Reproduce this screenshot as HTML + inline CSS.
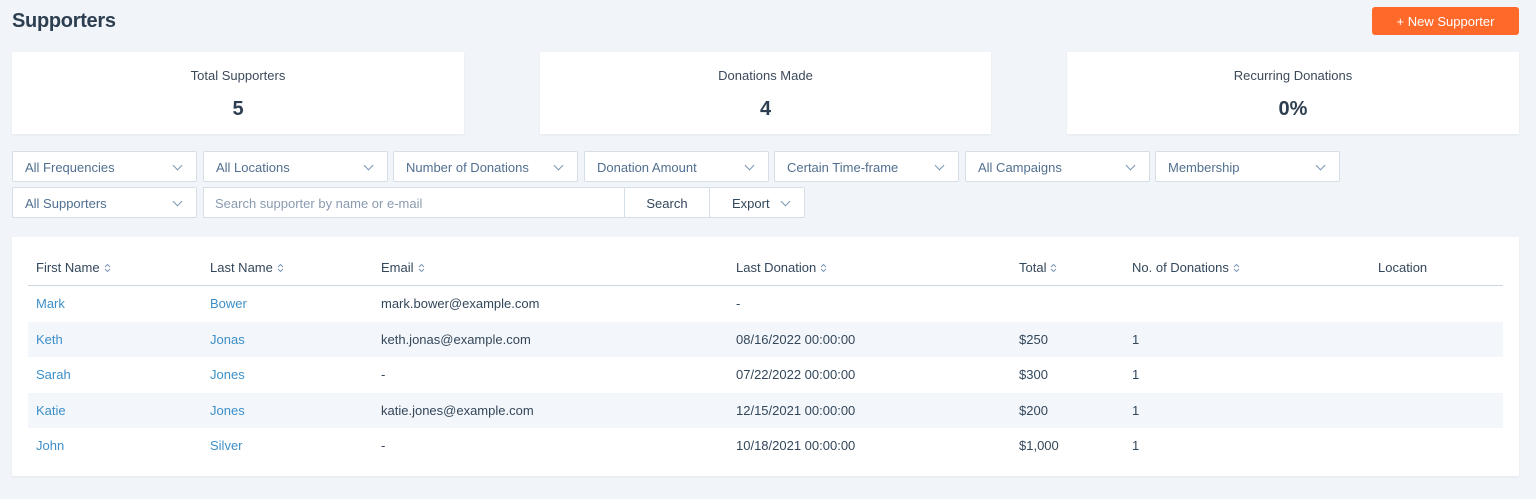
<!DOCTYPE html>
<html><head><style>
*{box-sizing:border-box;margin:0;padding:0}
body{width:1536px;height:499px;background:#f1f5f9;font-family:"Liberation Sans",sans-serif;color:#33475b;position:relative;overflow:hidden;font-size:13px}
.abs{position:absolute}
h1{position:absolute;left:12px;top:10px;font-size:20px;font-weight:bold;color:#2d3e50;letter-spacing:-0.3px}
.btn{left:1372px;top:7px;width:147px;height:28px;background:#ff6a2b;color:#fff;border-radius:3px;text-align:center;line-height:29px;font-size:13px}
.card{background:#fff;top:52px;height:82px;width:452px;box-shadow:0 1px 2px rgba(0,0,0,.06);text-align:center}
.card .l{margin-top:16px;font-size:13px;color:#3c4a5a}
.card .v{margin-top:15px;font-size:20px;font-weight:bold;color:#2d3e50}
.sel{height:31px;width:185px;background:#fff;border:1px solid #d6dee8;border-radius:2px;line-height:31px;padding-left:12px;color:#516f90;font-size:13px}
.sel:after{content:"";position:absolute;right:15px;top:10px;width:6px;height:6px;border-right:1px solid #7c98b6;border-bottom:1px solid #7c98b6;transform:rotate(45deg)}
.tbl{left:12px;top:237px;width:1507px;height:239px;background:#fff;box-shadow:0 1px 2px rgba(0,0,0,.06)}
.row{position:absolute;left:16px;width:1475px;height:35.5px;line-height:35.5px}
.row span{position:absolute;top:0}
.lnk{color:#3d8fc9}
.c1{left:8px}.c2{left:182px}.c3{left:353px}.c4{left:708px}.c5{left:991px}.c6{left:1104px}.c7{left:1350px}
.s{display:inline-block;width:7px;height:10px;margin-left:4px;vertical-align:-1px}
</style></head><body>
<h1>Supporters</h1>
<div class="abs btn">+ New Supporter</div>
<div class="abs card" style="left:12px"><div class="l">Total Supporters</div><div class="v">5</div></div>
<div class="abs card" style="left:540px;width:451px"><div class="l">Donations Made</div><div class="v">4</div></div>
<div class="abs card" style="left:1067px"><div class="l">Recurring Donations</div><div class="v">0%</div></div>

<div class="abs sel" style="left:12px;top:151px">All Frequencies</div>
<div class="abs sel" style="left:203px;top:151px">All Locations</div>
<div class="abs sel" style="left:393px;top:151px">Number of Donations</div>
<div class="abs sel" style="left:584px;top:151px">Donation Amount</div>
<div class="abs sel" style="left:774px;top:151px">Certain Time-frame</div>
<div class="abs sel" style="left:965px;top:151px">All Campaigns</div>
<div class="abs sel" style="left:1155px;top:151px">Membership</div>
<div class="abs sel" style="left:12px;top:187px">All Supporters</div>
<div class="abs" style="left:203px;top:187px;width:422px;height:31px;background:#fff;border:1px solid #d6dee8;line-height:31px;padding-left:11px;color:#8a9bb0">Search supporter by name or e-mail</div>
<div class="abs" style="left:624px;top:187px;width:86px;height:31px;background:#fff;border:1px solid #d6dee8;line-height:31px;text-align:center;color:#33475b">Search</div>
<div class="abs sel" style="left:709px;top:187px;width:96px;padding-left:22px;color:#33475b">Export</div>

<div class="abs tbl">
<div class="row" style="top:13px">
<span class="c1">First Name<svg class="s" viewBox="0 0 7 10"><path d="M1 4 3.5 1.5 6 4M1 6 3.5 8.5 6 6" fill="none" stroke="#7c98b6" stroke-width="1"/></svg></span>
<span class="c2">Last Name<svg class="s" viewBox="0 0 7 10"><path d="M1 4 3.5 1.5 6 4M1 6 3.5 8.5 6 6" fill="none" stroke="#7c98b6" stroke-width="1"/></svg></span>
<span class="c3">Email<svg class="s" viewBox="0 0 7 10"><path d="M1 4 3.5 1.5 6 4M1 6 3.5 8.5 6 6" fill="none" stroke="#7c98b6" stroke-width="1"/></svg></span>
<span class="c4">Last Donation<svg class="s" viewBox="0 0 7 10"><path d="M1 4 3.5 1.5 6 4M1 6 3.5 8.5 6 6" fill="none" stroke="#7c98b6" stroke-width="1"/></svg></span>
<span class="c5">Total<svg class="s" viewBox="0 0 7 10"><path d="M1 4 3.5 1.5 6 4M1 6 3.5 8.5 6 6" fill="none" stroke="#7c98b6" stroke-width="1"/></svg></span>
<span class="c6">No. of Donations<svg class="s" viewBox="0 0 7 10"><path d="M1 4 3.5 1.5 6 4M1 6 3.5 8.5 6 6" fill="none" stroke="#7c98b6" stroke-width="1"/></svg></span>
<span class="c7">Location</span></div>
<div class="abs" style="left:16px;top:48px;width:1475px;height:1px;background:#cbd6e2"></div>
<div class="row" style="top:49px"><span class="c1 lnk">Mark</span><span class="c2 lnk">Bower</span><span class="c3">mark.bower@example.com</span><span class="c4">-</span></div>
<div class="row" style="top:84.5px;background:#f3f6fa"><span class="c1 lnk">Keth</span><span class="c2 lnk">Jonas</span><span class="c3">keth.jonas@example.com</span><span class="c4">08/16/2022 00:00:00</span><span class="c5">$250</span><span class="c6">1</span></div>
<div class="row" style="top:120px"><span class="c1 lnk">Sarah</span><span class="c2 lnk">Jones</span><span class="c3">-</span><span class="c4">07/22/2022 00:00:00</span><span class="c5">$300</span><span class="c6">1</span></div>
<div class="row" style="top:155.5px;background:#f3f6fa"><span class="c1 lnk">Katie</span><span class="c2 lnk">Jones</span><span class="c3">katie.jones@example.com</span><span class="c4">12/15/2021 00:00:00</span><span class="c5">$200</span><span class="c6">1</span></div>
<div class="row" style="top:191px"><span class="c1 lnk">John</span><span class="c2 lnk">Silver</span><span class="c3">-</span><span class="c4">10/18/2021 00:00:00</span><span class="c5">$1,000</span><span class="c6">1</span></div>
</div>
</body></html>
